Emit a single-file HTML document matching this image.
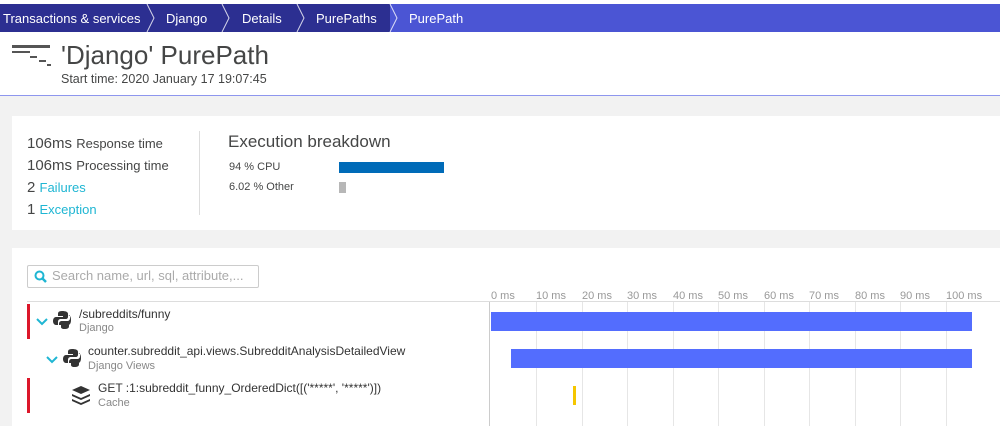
<!DOCTYPE html>
<html><head><meta charset="utf-8"><style>
*{margin:0;padding:0;box-sizing:border-box}
body{width:1000px;height:426px;overflow:hidden;background:#f2f2f2;font-family:"Liberation Sans",sans-serif;color:#454646;position:relative}
.a{position:absolute}
.bc{top:4px;left:0;width:1000px;height:28px;background:#2c2f91}
.bc span{position:absolute;top:7px;color:#fff;font-size:13px}
.t{font-size:11px;color:#999}
.grid{width:1px;background:#e6e6e6;top:302px;height:124px}
</style></head><body>
<div class="a" style="top:0;left:0;width:1000px;height:96px;background:#fff"></div>
<div class="a bc"></div>
<div class="a" style="top:4px;left:390px;width:610px;height:28px;background:#4b55d4"></div>
<svg class="a" style="top:4px;left:0" width="1000" height="28">
<g fill="none" stroke="#fff" stroke-width="1" opacity=".8">
<path d="M147 0 L154 14 L147 28"/><path d="M222 0 L229 14 L222 28"/><path d="M297 0 L304 14 L297 28"/><path d="M390 0 L397 14 L390 28"/></g></svg>
<div class="bc a" style="background:none"><span style="left:3px">Transactions &amp; services</span><span style="left:166px">Django</span><span style="left:242px">Details</span><span style="left:316px">PurePaths</span><span style="left:409px">PurePath</span></div>
<div class="a" style="left:12px;top:45px;width:38px;height:3px;background:#555"></div>
<div class="a" style="left:12px;top:51px;width:18px;height:2px;background:#555"></div>
<div class="a" style="left:30px;top:56px;width:7px;height:2px;background:#555"></div>
<div class="a" style="left:39px;top:60px;width:7px;height:2px;background:#555"></div>
<div class="a" style="left:47px;top:64px;width:4px;height:2px;background:#555"></div>
<div class="a" style="left:61px;top:40px;font-size:26px;color:#454646">'Django' PurePath</div>
<div class="a" style="left:61px;top:72px;font-size:12.5px">Start time: 2020 January 17 19:07:45</div>
<div class="a" style="top:95px;left:0;width:1000px;height:1px;background:#8e96ee"></div>

<div class="a" style="left:12px;top:116px;width:988px;height:114px;background:#fff"></div>
<div class="a" style="left:27px;top:133px;font-size:15px;line-height:22px">106ms <span style="font-size:13px">Response time</span><br>106ms <span style="font-size:13px">Processing time</span><br>2 <span style="font-size:13px;color:#1fb6d3">Failures</span><br>1 <span style="font-size:13px;color:#1fb6d3">Exception</span></div>
<div class="a" style="left:199px;top:131px;width:1px;height:84px;background:#ddd"></div>
<div class="a" style="left:228px;top:132px;font-size:17px">Execution breakdown</div>
<div class="a" style="left:229px;top:161px;font-size:11px">94 % CPU</div>
<div class="a" style="left:229px;top:181px;font-size:11px">6.02 % Other</div>
<div class="a" style="left:339px;top:162px;width:105px;height:11px;background:#006bb8"></div>
<div class="a" style="left:339px;top:182px;width:7px;height:11px;background:#b7b7b7"></div>

<div class="a" style="left:12px;top:248px;width:988px;height:178px;background:#fff"></div>
<div class="a" style="left:27px;top:265px;width:232px;height:23px;border:1px solid #ccc;border-radius:2px"></div>
<svg class="a" style="left:34px;top:270px" width="14" height="14"><circle cx="5.5" cy="5.5" r="4" fill="none" stroke="#1fb6d3" stroke-width="2"/><path d="M8.5 8.5 L12 12" stroke="#1fb6d3" stroke-width="2.5"/></svg>
<div class="a" style="left:52px;top:268px;font-size:13px;color:#aaa">Search name, url, sql, attribute,...</div>
<div class="a" style="left:27px;top:301px;width:980px;height:1px;background:#ddd"></div>
<div class="a" style="left:489px;top:302px;width:1px;height:124px;background:#ccc"></div>
<div class="a grid" style="left:536px"></div><div class="a grid" style="left:582px"></div><div class="a grid" style="left:627px"></div><div class="a grid" style="left:673px"></div><div class="a grid" style="left:718px"></div><div class="a grid" style="left:764px"></div><div class="a grid" style="left:809px"></div><div class="a grid" style="left:855px"></div><div class="a grid" style="left:900px"></div><div class="a grid" style="left:946px"></div>
<div class="a t" style="left:491px;top:290px">0 ms</div><div class="a t" style="left:536px;top:290px">10 ms</div><div class="a t" style="left:582px;top:290px">20 ms</div><div class="a t" style="left:627px;top:290px">30 ms</div><div class="a t" style="left:673px;top:290px">40 ms</div><div class="a t" style="left:718px;top:290px">50 ms</div><div class="a t" style="left:764px;top:290px">60 ms</div><div class="a t" style="left:809px;top:290px">70 ms</div><div class="a t" style="left:855px;top:290px">80 ms</div><div class="a t" style="left:900px;top:290px">90 ms</div><div class="a t" style="left:946px;top:290px">100 ms</div>
<div class="a" style="left:491px;top:312px;width:481px;height:19px;background:#536dfe"></div>
<div class="a" style="left:511px;top:349px;width:461px;height:19px;background:#536dfe"></div>
<div class="a" style="left:573px;top:386px;width:3px;height:19px;background:#f5c600"></div>

<div class="a" style="left:27px;top:304px;width:3px;height:35px;background:#dc172a"></div>
<div class="a" style="left:27px;top:378px;width:3px;height:35px;background:#dc172a"></div>
<svg class="a" style="left:36px;top:318px" width="12" height="8"><path d="M1 1 L6 6 L11 1" fill="none" stroke="#1fb6d3" stroke-width="2"/></svg>
<svg class="a" style="left:46px;top:356px" width="12" height="8"><path d="M1 1 L6 6 L11 1" fill="none" stroke="#1fb6d3" stroke-width="2"/></svg>
<svg class="a" style="left:53px;top:310px" width="20" height="20"><path d="M9 1c-4 0-4 2-4 3v2h5v1H3c-2 0-3 2-3 4s1 4 3 4h2v-3c0-2 1-3 3-3h5c1 0 2-1 2-2V4c0-2-2-3-6-3z" fill="#333"/><path d="M11 19c4 0 5-1 5-3v-3h-5c-2 0-3-1-3 1v3c0 1 1 2 3 2zM17 5v3c0 2-1 3-3 3H9c-2 0-3 1-3 3v1h9c2 0 3-2 3-5s-1-5-3-5z" fill="#333"/></svg>
<svg class="a" style="left:63px;top:348px" width="20" height="20"><path d="M9 1c-4 0-4 2-4 3v2h5v1H3c-2 0-3 2-3 4s1 4 3 4h2v-3c0-2 1-3 3-3h5c1 0 2-1 2-2V4c0-2-2-3-6-3z" fill="#333"/><path d="M11 19c4 0 5-1 5-3v-3h-5c-2 0-3-1-3 1v3c0 1 1 2 3 2zM17 5v3c0 2-1 3-3 3H9c-2 0-3 1-3 3v1h9c2 0 3-2 3-5s-1-5-3-5z" fill="#333"/></svg>
<svg class="a" style="left:71px;top:385px" width="20" height="20"><path d="M10 1L19 5L10 9L1 5Z M1 9L10 13L19 9V11L10 15L1 11Z M1 14L10 18L19 14V16L10 20L1 16Z" fill="#333"/></svg>
<div class="a" style="left:79px;top:307px;font-size:12px;color:#333">/subreddits/funny</div>
<div class="a" style="left:79px;top:322px;font-size:11px;color:#888">Django</div>
<div class="a" style="left:88px;top:344px;font-size:12px;color:#333">counter.subreddit_api.views.SubredditAnalysisDetailedView</div>
<div class="a" style="left:88px;top:360px;font-size:11px;color:#888">Django Views</div>
<div class="a" style="left:98px;top:381px;font-size:12px;color:#333">GET :1:subreddit_funny_OrderedDict([('*****', '*****')])</div>
<div class="a" style="left:98px;top:397px;font-size:11px;color:#888">Cache</div>
</body></html>
